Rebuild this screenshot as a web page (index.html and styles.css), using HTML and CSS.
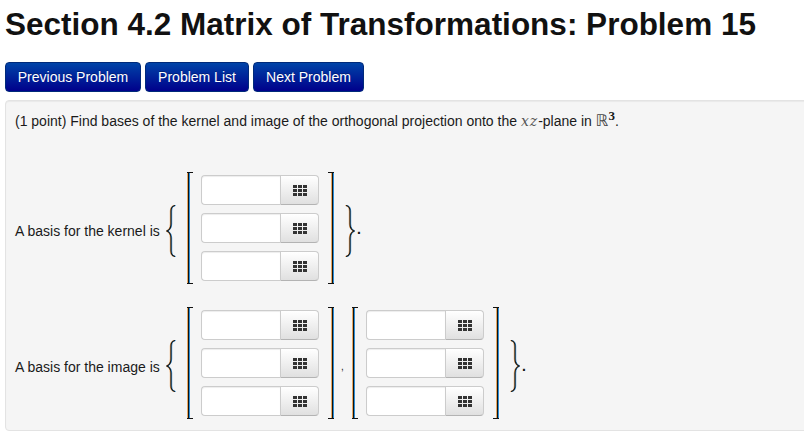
FILE: index.html
```html
<!DOCTYPE html>
<html lang="en">
<head>
<meta charset="utf-8">
<title>Problem 15</title>
<link rel="stylesheet" href="styles.css">
</head>
<body>
<svg class="defs" width="0" height="0" aria-hidden="true">
  <symbol id="grid" viewBox="0 0 14 11">
    <path d="M0 0h4v3H0zM5 0h4v3H5zM10 0h4v3h-4zM0 4h4v3H0zM5 4h4v3H5zM10 4h4v3h-4zM0 8h4v3H0zM5 8h4v3H5zM10 8h4v3h-4z"/>
  </symbol>
  <symbol id="brace" viewBox="0 0 10 52">
    <path transform="translate(-.7 0)" d="M9 .5C6.500 1 5 2.500 5 6v13c0 3.500-1.500 5.800-4 7 2.500 1.200 4 3.500 4 7v13c0 3.500 1.500 5 4 5.500" fill="none" stroke="#f0a050" stroke-width="1"/>
    <path transform="translate(.7 0)" d="M9 .5C6.500 1 5 2.500 5 6v13c0 3.500-1.500 5.800-4 7 2.500 1.200 4 3.500 4 7v13c0 3.500 1.500 5 4 5.500" fill="none" stroke="#2a8fe0" stroke-width="1"/>
    <path d="M9 .5C6.500 1 5 2.500 5 6v13c0 3.500-1.500 5.800-4 7 2.500 1.200 4 3.500 4 7v13c0 3.500 1.500 5 4 5.500" fill="none" stroke="#111" stroke-width="1.100"/>
  </symbol>
  <symbol id="brace-r" viewBox="0 0 10 52">
    <path transform="translate(9.300 0) scale(-1 1)" d="M9 .5C6.500 1 5 2.500 5 6v13c0 3.500-1.500 5.800-4 7 2.500 1.200 4 3.500 4 7v13c0 3.500 1.500 5 4 5.500" fill="none" stroke="#f0a050" stroke-width="1"/>
    <path transform="translate(10.700 0) scale(-1 1)" d="M9 .5C6.500 1 5 2.500 5 6v13c0 3.500-1.500 5.800-4 7 2.500 1.200 4 3.500 4 7v13c0 3.500 1.500 5 4 5.500" fill="none" stroke="#2a8fe0" stroke-width="1"/>
    <path transform="translate(10 0) scale(-1 1)" d="M9 .5C6.500 1 5 2.500 5 6v13c0 3.500-1.500 5.800-4 7 2.500 1.200 4 3.500 4 7v13c0 3.500 1.500 5 4 5.500" fill="none" stroke="#111" stroke-width="1.100"/>
  </symbol>
</svg>
<h1 class="title">Section 4.2 Matrix of Transformations: Problem 15</h1>
<nav class="nav">
  <a class="btn btn-prev">Previous Problem</a>
  <a class="btn btn-list">Problem List</a>
  <a class="btn btn-next">Next Problem</a>
</nav>
<main class="well">
  <p class="question">(1 point) Find bases of the kernel and image of the orthogonal projection onto the <span class="math">xz</span>-plane in <span class="bb">ℝ</span><sup class="sup">3</sup>.</p>

  <div class="answer answer-kernel">
    <span class="label">A basis for the kernel is</span>
    <svg class="brace"><use href="#brace"/></svg>
    <div class="matrix">
      <div class="cell"><span class="field"></span><span class="addon"><svg class="grid"><use href="#grid"/></svg></span></div>
      <div class="cell"><span class="field"></span><span class="addon"><svg class="grid"><use href="#grid"/></svg></span></div>
      <div class="cell"><span class="field"></span><span class="addon"><svg class="grid"><use href="#grid"/></svg></span></div>
    </div>
    <svg class="brace brace-right"><use href="#brace-r"/></svg>
    <span class="period">.</span>
  </div>

  <div class="answer answer-image">
    <span class="label">A basis for the image is</span>
    <svg class="brace"><use href="#brace"/></svg>
    <div class="matrix">
      <div class="cell"><span class="field"></span><span class="addon"><svg class="grid"><use href="#grid"/></svg></span></div>
      <div class="cell"><span class="field"></span><span class="addon"><svg class="grid"><use href="#grid"/></svg></span></div>
      <div class="cell"><span class="field"></span><span class="addon"><svg class="grid"><use href="#grid"/></svg></span></div>
    </div>
    <span class="comma">,</span>
    <div class="matrix">
      <div class="cell"><span class="field"></span><span class="addon"><svg class="grid"><use href="#grid"/></svg></span></div>
      <div class="cell"><span class="field"></span><span class="addon"><svg class="grid"><use href="#grid"/></svg></span></div>
      <div class="cell"><span class="field"></span><span class="addon"><svg class="grid"><use href="#grid"/></svg></span></div>
    </div>
    <svg class="brace brace-right"><use href="#brace-r"/></svg>
    <span class="period">.</span>
  </div>
</main>
</body>
</html>
```
FILE: styles.css
```css
* { box-sizing: border-box; }
html, body { margin: 0; padding: 0; background: #fff; }
body {
  width: 804px;
  height: 442px;
  overflow: hidden;
  font-family: "Liberation Sans", Arial, sans-serif;
  font-size: 14px;
  color: #222;
}
.defs { position: absolute; }
.title {
  margin: 0;
  padding: 6px 0 0 5px;
  height: 62px;
  font-size: 31.5px;
  line-height: 36px;
  font-weight: 700;
  color: #111;
  white-space: nowrap;
}
.nav { display: flex; gap: 4px; padding-left: 5px; }
.btn {
  display: block;
  height: 30px;
  text-align: center;
  line-height: 28px;
  color: #fff;
  font-size: 14px;
  border: 1px solid #002a7a;
  border-radius: 4px;
  background: linear-gradient(#0044a8, #00008b);
  text-shadow: 0 -1px 0 rgba(0,0,0,.25);
  white-space: nowrap;
}
.btn-prev { width: 136px; }
.btn-list { width: 104px; }
.btn-next { width: 111px; }
.well {
  margin: 8px 0 0 5px;
  width: 805px;
  height: 331px;
  padding: 10px 9px 0;
  background: #f5f5f5;
  border: 1px solid #e3e3e3;
  border-radius: 4px;
  box-shadow: inset 0 1px 1px rgba(0,0,0,.05);
}
.question { margin: 0; height: 20px; line-height: 20px; white-space: nowrap; color: #1a1a1a; }
.math {
  font-family: "DejaVu Serif", serif;
  font-style: italic;
  font-size: 14px;
  color: #555;
  letter-spacing: 1px;
}
.bb { font-family: "DejaVu Sans", sans-serif; font-size: 16px; line-height: 0; color: #444; }
.sup {
  font-family: "Liberation Serif", serif;
  font-weight: 700;
  font-size: 13px;
  line-height: 0;
}
.answer { display: flex; align-items: center; height: 112px; }
.answer-kernel { margin-top: 41px; }
.answer-image { margin-top: 23px; }
.label { width: 151px; margin-top: 6px; white-space: nowrap; color: #1a1a1a; }
.answer-image .label { margin-top: 8px; }
.brace { width: 10px; height: 52px; flex: none; margin-top: 6px; }
.brace-right { margin-left: 11px; }
.matrix {
  position: relative;
  margin-left: 11px;
  width: 147px;
  height: 112px;
  padding: 3px 14px;
  display: flex;
  flex-direction: column;
  justify-content: space-between;
}
.matrix::before, .matrix::after {
  content: "";
  position: absolute;
  top: 0;
  bottom: 0;
  width: 6px;
}
.matrix::before {
  left: 0;
  background:
    linear-gradient(#111, #111) 0 0 / 100% 1px no-repeat,
    linear-gradient(#111, #111) 0 100% / 100% 1px no-repeat,
    linear-gradient(to right, #e8a860 1px, #111 1px 2px, #2a8fd8 2px 3px) 0 0 / 3px 100% no-repeat;
}
.matrix::after {
  right: 0;
  background:
    linear-gradient(#111, #111) 0 0 / 100% 1px no-repeat,
    linear-gradient(#111, #111) 0 100% / 100% 1px no-repeat,
    linear-gradient(to right, #e8a860 1px, #111 1px 2px, #2a8fd8 2px 3px) 100% 0 / 3px 100% no-repeat;
}
.comma { width: 0; margin-left: 7px; margin-top: 6px; font-size: 10px; color: #222; }
.cell { display: flex; width: 118px; height: 30px; }
.field {
  width: 79px;
  background: #fff;
  border: 1px solid #ccc;
  border-right: 0;
  border-radius: 4px 0 0 4px;
  box-shadow: inset 0 1px 1px rgba(0,0,0,.075);
}
.addon {
  width: 39px;
  display: flex;
  align-items: center;
  justify-content: center;
  border: 1px solid #ccc;
  border-bottom-color: #b3b3b3;
  border-radius: 0 4px 4px 0;
  background: linear-gradient(#fff, #e0e0e0);
}
.grid { width: 14px; height: 11px; fill: #333; }
.period { margin-left: 2px; margin-top: 1px; color: #111; font-weight: 700; }
.answer-image .period { margin-top: 5px; }
```
